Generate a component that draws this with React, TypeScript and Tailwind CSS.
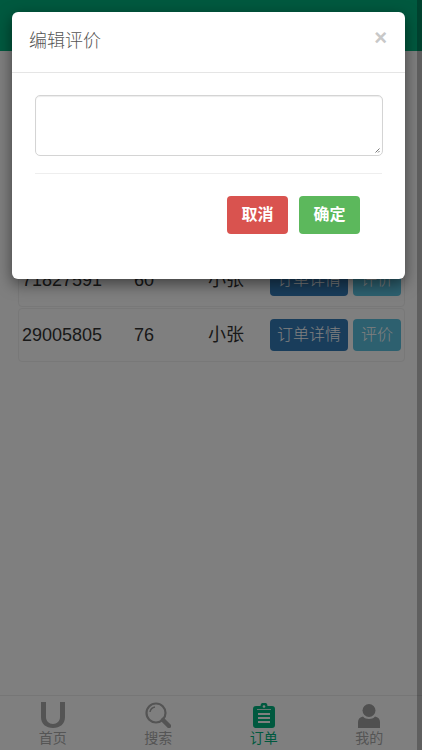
const orders = [
  { id: "71827591", qty: "60", name: "小张" },
  { id: "29005805", qty: "76", name: "小张" },
];

function OrderRow({ id, qty, name }: { id: string; qty: string; name: string }) {
  return (
    <div className="mb-[1px] flex h-[54px] items-center rounded border border-[#f0f0f0] pl-[3px] text-[18px] text-[#333]">
      <span className="w-[112px]">{id}</span>
      <span className="w-[74px]">{qty}</span>
      <span className="w-[62px]">{name}</span>
      <span className="flex h-[32px] w-[78px] items-center justify-center rounded bg-[#337ab7] text-[16px] font-light text-white">订单详情</span>
      <span className="ml-[5px] flex h-[32px] w-[48px] items-center justify-center rounded bg-[#5bc0de] text-[16px] font-light text-white">评价</span>
    </div>
  );
}

function TabBar() {
  return (
    <div className="flex h-[55px] w-[422px] border-t border-[#ececec] bg-white text-[14px] leading-[14px] text-[#aaa]">
      <div className="flex flex-1 flex-col items-center">
        <svg viewBox="0 0 24 26" className="mt-[6px] h-[26px] w-[24px]" fill="#a8a8a8">
          <path d="M0 0h5v15c0 4 3 7 7 7s7-3 7-7V0h5v15c0 7-5 11-12 11S0 22 0 15z" />
        </svg>
        <span className="mt-[3px]">首页</span>
      </div>
      <div className="flex flex-1 flex-col items-center">
        <svg viewBox="0 0 26 26" className="mt-[6px] h-[26px] w-[26px]" fill="none" stroke="#a8a8a8">
          <circle cx="11" cy="11" r="9.500" strokeWidth="2.200" />
          <path d="M5 10a6 6 0 0 1 5-5" strokeWidth="1.500" />
          <path d="M18 18l6 6" strokeWidth="4.500" strokeLinecap="round" />
        </svg>
        <span className="mt-[3px]">搜索</span>
      </div>
      <div className="flex flex-1 flex-col items-center text-[#00b37e]">
        <svg viewBox="0 0 22 25" className="mt-[7px] h-[25px] w-[22px]" fill="#00b37e">
          <path d="M3 3h4.500a3.500 3.500 0 0 1 7 0H19a3 3 0 0 1 3 3v16a3 3 0 0 1-3 3H3a3 3 0 0 1-3-3V6a3 3 0 0 1 3-3z" />
          <path d="M5 10h12v2H5zM5 14h12v2H5zM5 18h12v2H5z" fill="#fff" />
          <circle cx="11" cy="3.500" r="1.300" fill="#fff" />
          <path d="M4 6.500h14" stroke="#fff" strokeWidth="0.800" />
        </svg>
        <span className="mt-[3px]">订单</span>
      </div>
      <div className="flex flex-1 flex-col items-center">
        <svg viewBox="0 0 22 24" className="mt-[8px] h-[24px] w-[22px]" fill="#a0a0a0">
          <circle cx="11" cy="6.500" r="6.500" />
          <path d="M0 24v-6c0-3 2-5 5-5.500 1.500 1.800 3.800 2.500 6 2.500s4.500-.7 6-2.500c3 .5 5 2.500 5 5.500v6z" />
        </svg>
        <span className="mt-[3px]">我的</span>
      </div>
    </div>
  );
}

export default function App() {
  return (
    <div className="relative flex h-[750px] w-[422px] flex-col overflow-hidden bg-white font-['Liberation_Sans','Noto_Sans_CJK_SC',sans-serif]">
      {/* page under the dialog */}
      <div className="h-[51px] bg-[#00b37e]" />
      <div className="flex-1 px-[18px] pr-[17px] pt-[202px]">
        {orders.map((o) => (
          <OrderRow key={o.id} {...o} />
        ))}
      </div>
      <TabBar />

      <div className="absolute inset-0 bg-black/50" />
      <div className="absolute bottom-0 right-0 top-0 w-[5px] bg-black/25" />

      {/* dialog */}
      <div className="absolute left-[12px] top-[12px] h-[267px] w-[393px] rounded-md bg-white shadow-[0_5px_15px_rgba(0,0,0,0.5)]">
        <div className="flex h-[61px] items-start justify-between border-b border-[#e5e5e5] pl-[17px] pr-[18px]">
          <span className="mt-[16px] text-[18px] font-light leading-[27px] text-[#555]">编辑评价</span>
          <span className="mt-[12px] text-[22px] font-bold leading-[27px] text-[#c8c8c8]">×</span>
        </div>
        <div className="px-[23px] pt-[22px]">
          <div className="relative h-[61px] w-[348px]">
            <textarea className="block h-full w-full resize-none rounded-[5px] border border-[#d4d4d4] shadow-[inset_0_1px_1px_rgba(0,0,0,0.075)]" />
            <svg viewBox="0 0 5 5" className="absolute bottom-[3px] right-[3px] h-[5px] w-[5px]" fill="none" stroke="#777">
              <path d="M0.500 4.500L4.500 0.500M3 4.500L4.500 3" />
            </svg>
          </div>
          <div className="mt-[17px] border-t border-[#eee]" />
          <div className="mt-[22px] flex justify-end gap-[11px] pr-[22px]">
            <button className="h-[38px] w-[61px] rounded bg-[#d9534f] text-[16px] font-bold text-white">取消</button>
            <button className="h-[38px] w-[61px] rounded bg-[#5cb85c] text-[16px] font-bold text-white">确定</button>
          </div>
        </div>
      </div>
    </div>
  );
}
